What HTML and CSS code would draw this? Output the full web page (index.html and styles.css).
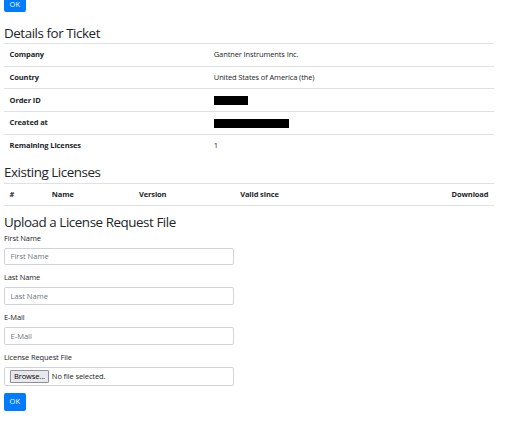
FILE: index.html
```html
<!DOCTYPE html>
<html lang="en">

<head>
    <meta charset="UTF-8">
    <meta name="viewport" content="width=device-width, initial-scale=1.0">
    <title>Ticket</title>

    <link rel="stylesheet" href="styles.css">

</head>

<body>

    <div class="page">

        <button class="btn-ok top-ok">OK</button>

        <h3>Details for Ticket</h3>
        <table class="details">
            <tr>
                <th>Company</th>
                <td>Gantner Instruments Inc.</td>
            </tr>
            <tr>
                <th>Country</th>
                <td>United States of America (the)</td>
            </tr>
            <tr>
                <th>Order ID</th>
                <td><span class="redact" style="width: 34px;"></span></td>
            </tr>
            <tr>
                <th>Created at</th>
                <td><span class="redact" style="width: 75px;"></span></td>
            </tr>
            <tr>
                <th>Remaining Licenses</th>
                <td>1</td>
            </tr>
        </table>

        <h3>Existing Licenses</h3>
        <table class="licenses">
            <thead>
                <tr>
                    <th class="c-num">#</th>
                    <th class="c-name">Name</th>
                    <th class="c-ver">Version</th>
                    <th class="c-valid">Valid since</th>
                    <th class="c-dl">Download</th>
                </tr>
            </thead>
            <tbody></tbody>
        </table>

        <h3>Upload a License Request File</h3>
        <form class="upload">
            <div class="group">
                <label for="first">First Name</label>
                <input type="text" id="first" placeholder="First Name">
            </div>
            <div class="group">
                <label for="last">Last Name</label>
                <input type="text" id="last" placeholder="Last Name">
            </div>
            <div class="group">
                <label for="mail">E-Mail</label>
                <input type="text" id="mail" placeholder="E-Mail">
            </div>
            <div class="group">
                <label>License Request File</label>
                <div class="file-box">
                    <span class="browse">Browse...</span>
                    <span class="file-name">No file selected.</span>
                </div>
            </div>
            <button type="button" class="btn-ok">OK</button>
        </form>

    </div>

</body>

</html>
```

FILE: styles.css
```css
body {
    margin: 0;
    font-family: "Open Sans", "Noto Sans", sans-serif;
    font-size: 7.5px;
    line-height: 1.5;
    letter-spacing: -0.12px;
    color: #212529;
    background: #fff;
    overflow: hidden;
}

.page {
    width: 490px;
    padding-left: 4px;
}

h3 {
    font-weight: 400;
    font-size: 13.4px;
    line-height: 16.3px;
    letter-spacing: -0.45px;
    margin: 0 0 2px 0;
}

.btn-ok {
    display: block;
    box-sizing: border-box;
    background-color: #007bff;
    color: white;
    border: none;
    border-radius: 2px;
    font-family: inherit;
    font-size: 7.5px;
    line-height: 1.5;
    padding: 3.3px 5.6px;
    height: 18px;
}

.top-ok {
    margin-top: -5.7px;
    padding-top: 4.5px;
    padding-bottom: 2px;
    margin-bottom: 12.6px;
}

table {
    width: 100%;
    border-collapse: collapse;
    margin-bottom: 8px;
}

table th,
table td {
    text-align: left;
    padding: 5.2px 5.6px;
    border-top: 1px solid #dee2e6;
    vertical-align: top;
    height: 11.25px;
    line-height: 11.25px;
}

table th {
    font-weight: 700;
}

.details th {
    width: 193px;
}

.redact {
    display: inline-block;
    height: 9px;
    background: #000;
    vertical-align: middle;
}

.licenses thead th {
    border-bottom: 1px solid #dee2e6;
}

.licenses .c-num {
    width: 31px;
}

.licenses .c-name {
    width: 76px;
}

.licenses .c-ver {
    width: 90px;
}

.licenses .c-dl {
    text-align: right;
}

.upload .group {
    margin-bottom: 7px;
}

.upload label {
    display: block;
    line-height: 11.25px;
    margin-bottom: 3.8px;
}

.upload input {
    display: block;
    box-sizing: border-box;
    width: 230px;
    height: 17.7px;
    padding: 2px 5.6px;
    border: 1px solid #ced4da;
    border-radius: 2px;
    font-family: inherit;
    font-size: 7.5px;
    color: #495057;
}

.upload input::placeholder {
    color: #6c757d;
}

.file-box {
    box-sizing: border-box;
    width: 230px;
    height: 19px;
    border: 1px solid #ced4da;
    border-radius: 2px;
    display: flex;
    align-items: center;
    gap: 3px;
    padding-left: 5px;
}

.browse {
    background: #e9e9ed;
    border: 1px solid #8f8f9d;
    border-radius: 1px;
    padding: 0 3px;
    line-height: 11px;
    color: #000;
    font-size: 7.5px;
}

.file-name {
    color: #212529;
}
```
